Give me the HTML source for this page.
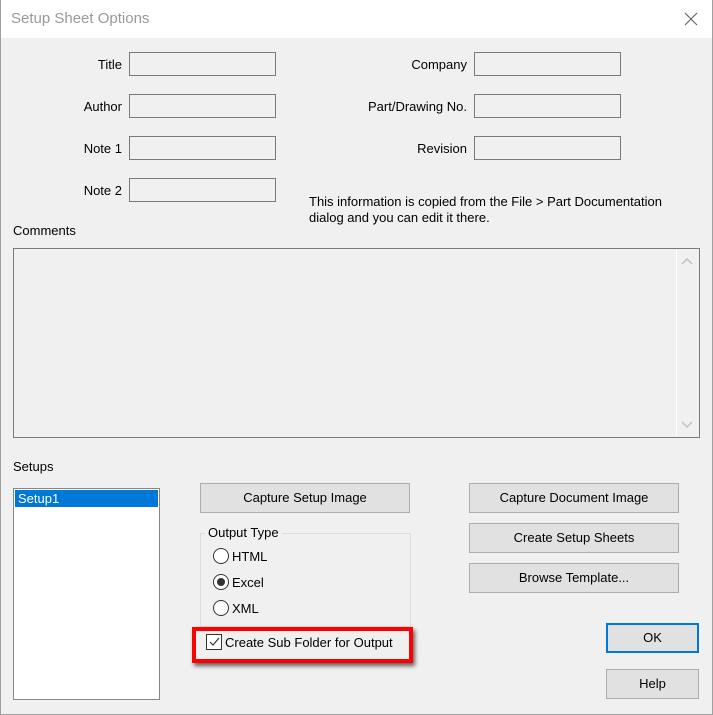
<!DOCTYPE html>
<html><head><style>
*{box-sizing:border-box;margin:0;padding:0}
body{width:713px;height:715px;background:#f0f0f0;font-family:"Liberation Sans",sans-serif;font-size:13px;color:#000;position:relative;overflow:hidden}
.a{position:absolute}
.win{left:0;top:0;width:713px;height:715px;border:1px solid #a0a0a0;border-top:none}
.tb{left:1px;top:0;width:711px;height:38px;background:#fff}
.in{position:absolute;width:147px;height:24px;border:1px solid #7a7a7a;background:#f0f0f0}
.lb{position:absolute;text-align:right;width:110px}
.btn{position:absolute;height:30px;background:#e1e1e1;border:1px solid #adadad;text-align:center;line-height:28px}
.rad{position:absolute;width:16px;height:16px;border:1px solid #333;border-radius:50%;background:#fff}
</style></head><body>
<div class="a win"></div>
<div class="a tb"></div>
<div class="a" style="left:11px;top:10px;font-size:15px;color:#999">Setup Sheet Options</div>
<svg class="a" style="left:684px;top:12px" width="14" height="14"><path d="M1 1L13 13M13 1L1 13" stroke="#666" stroke-width="1.2"/></svg>

<div class="lb" style="left:12px;top:57px">Title</div><div class="in" style="left:129px;top:52px"></div>
<div class="lb" style="left:12px;top:99px">Author</div><div class="in" style="left:129px;top:94px"></div>
<div class="lb" style="left:12px;top:141px">Note 1</div><div class="in" style="left:129px;top:136px"></div>
<div class="lb" style="left:12px;top:183px">Note 2</div><div class="in" style="left:129px;top:178px"></div>

<div class="lb" style="left:307px;top:57px;width:160px">Company</div><div class="in" style="left:474px;top:52px"></div>
<div class="lb" style="left:307px;top:99px;width:160px">Part/Drawing No.</div><div class="in" style="left:474px;top:94px"></div>
<div class="lb" style="left:307px;top:141px;width:160px">Revision</div><div class="in" style="left:474px;top:136px"></div>

<div class="a" style="left:309px;top:194px;line-height:16px">This information is copied from the File &gt; Part Documentation<br>dialog and you can edit it there.</div>

<div class="a" style="left:13px;top:223px">Comments</div>
<div class="a" style="left:13px;top:248px;width:687px;height:190px;border:1px solid #7a7a7a;background:#f0f0f0">
 <div class="a" style="left:662px;top:1px;width:1px;height:186px;background:#fff"></div>
 <svg class="a" style="left:667px;top:9px" width="12" height="8"><path d="M1 6L6 1L11 6" stroke="#c0c0c0" fill="none" stroke-width="1.5"/></svg>
 <svg class="a" style="left:667px;top:172px" width="12" height="8"><path d="M1 1L6 6L11 1" stroke="#c0c0c0" fill="none" stroke-width="1.5"/></svg>
</div>

<div class="a" style="left:13px;top:459px">Setups</div>
<div class="a" style="left:13px;top:488px;width:147px;height:212px;border:1px solid #828790;background:#fff">
 <div class="a" style="left:1px;top:1px;width:143px;height:17px;background:#0078d7;color:#fff;padding-left:3px;line-height:17px">Setup1</div>
</div>

<div class="btn" style="left:200px;top:483px;width:210px">Capture Setup Image</div>
<div class="a" style="left:200px;top:533px;width:211px;height:94px;border:1px solid #dcdcdc"></div>
<div class="a" style="left:205px;top:525px;background:#f0f0f0;padding:0 3px">Output Type</div>
<div class="rad" style="left:213px;top:548px"></div><div class="a" style="left:232px;top:549px">HTML</div>
<div class="rad" style="left:213px;top:574px"><div class="a" style="left:3px;top:3px;width:8px;height:8px;border-radius:50%;background:#333"></div></div><div class="a" style="left:232px;top:575px">Excel</div>
<div class="rad" style="left:213px;top:600px"></div><div class="a" style="left:232px;top:601px">XML</div>

<div class="a" style="left:192px;top:627px;width:221px;height:36px;border:4px solid #f00;box-shadow:2px 3px 4px rgba(0,0,0,.6)"></div>
<div class="a" style="left:206px;top:634px;width:16px;height:16px;border:1px solid #333;background:#fff">
<svg class="a" style="left:1px;top:1px" width="12" height="12"><path d="M2 6L5 9L11 2" stroke="#333" fill="none" stroke-width="1.2"/></svg></div>
<div class="a" style="left:225px;top:635px">Create Sub Folder for Output</div>

<div class="btn" style="left:469px;top:483px;width:210px">Capture Document Image</div>
<div class="btn" style="left:469px;top:523px;width:210px">Create Setup Sheets</div>
<div class="btn" style="left:469px;top:563px;width:210px">Browse Template...</div>
<div class="btn" style="left:606px;top:623px;width:93px;border:2px solid #0078d7;line-height:26px">OK</div>
<div class="btn" style="left:606px;top:669px;width:93px">Help</div>
</body></html>
